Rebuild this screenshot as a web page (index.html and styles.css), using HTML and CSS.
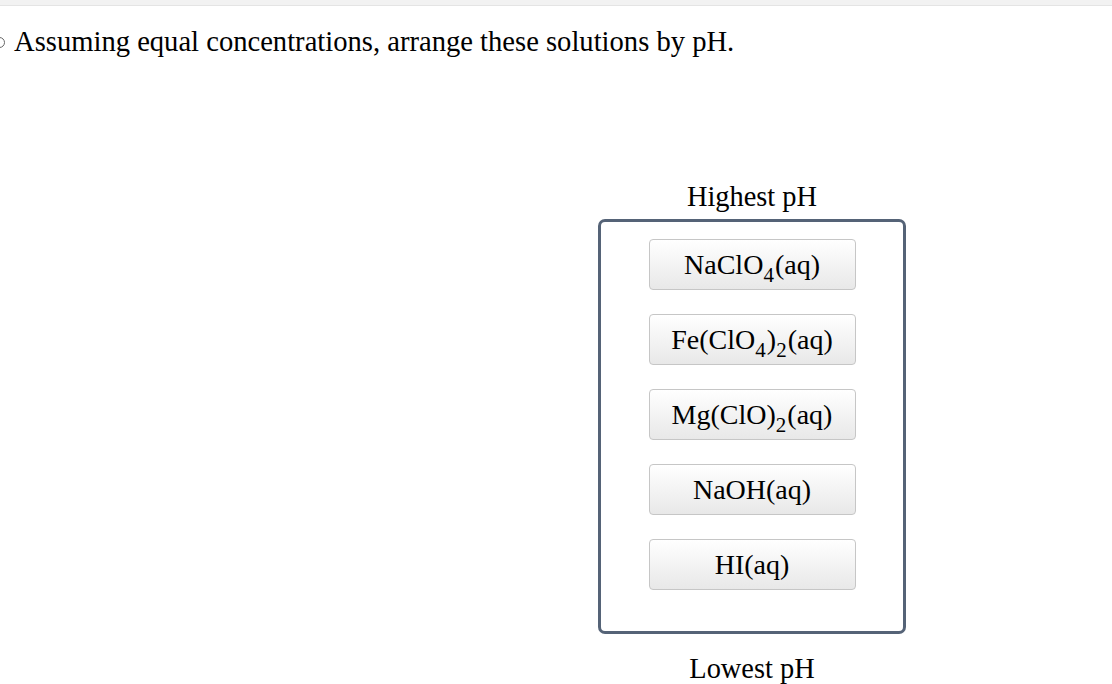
FILE: index.html
```html
<!DOCTYPE html>
<html>
<head>
<meta charset="utf-8">
<link rel="stylesheet" href="styles.css">
</head>
<body>
<div class="topbar"></div>
<p class="question"><span class="bullet"></span>Assuming equal concentrations, arrange these solutions by pH.</p>
<div class="sorter">
  <div class="label top">Highest pH</div>
  <div class="box">
    <div class="item">NaClO<sub>4</sub>(aq)</div>
    <div class="item">Fe(ClO<sub>4</sub>)<sub>2</sub>(aq)</div>
    <div class="item">Mg(ClO)<sub>2</sub>(aq)</div>
    <div class="item">NaOH(aq)</div>
    <div class="item">HI(aq)</div>
  </div>
  <div class="label bottom">Lowest pH</div>
</div>
</body>
</html>
```
FILE: styles.css
```css
html, body {
  margin: 0;
  padding: 0;
  background: #ffffff;
  font-family: "Liberation Serif", "Times New Roman", serif;
  color: #000;
  overflow: hidden;
}
.topbar {
  height: 5px;
  background: #f2f2f2;
  border-bottom: 1px solid #e4e4e4;
}
.question {
  margin: 0;
  padding: 20px 0 0 14px;
  font-size: 28.6px;
  line-height: 32px;
}
.bullet {
  display: inline-block;
  width: 9px;
  height: 9px;
  border: 1px solid #666;
  border-radius: 50%;
  margin-left: -20px;
  margin-right: 9px;
  vertical-align: 3px;
}
.sorter {
  margin: 123px 0 0 598px;
  width: 308px;
  display: flex;
  flex-direction: column;
  align-items: center;
}
.label {
  font-size: 28.4px;
  line-height: 32px;
}
.label.top {
  margin-bottom: 6px;
}
.label.bottom {
  margin-top: 19px;
}
.box {
  box-sizing: border-box;
  width: 308px;
  height: 415px;
  border: 3px solid #556377;
  border-radius: 7px;
  padding: 17px 0 0 0;
  display: flex;
  flex-direction: column;
  align-items: center;
  gap: 24px;
}
.item {
  box-sizing: border-box;
  width: 207px;
  height: 51px;
  border: 1px solid #c6c6c6;
  border-radius: 4px;
  background: linear-gradient(#ffffff, #e8e8e8);
  font-size: 28px;
  line-height: 49px;
  text-align: center;
  white-space: nowrap;
}
.item sub {
  font-size: 21px;
  line-height: 0;
  vertical-align: -8px;
  margin-right: 1px;
}
```
